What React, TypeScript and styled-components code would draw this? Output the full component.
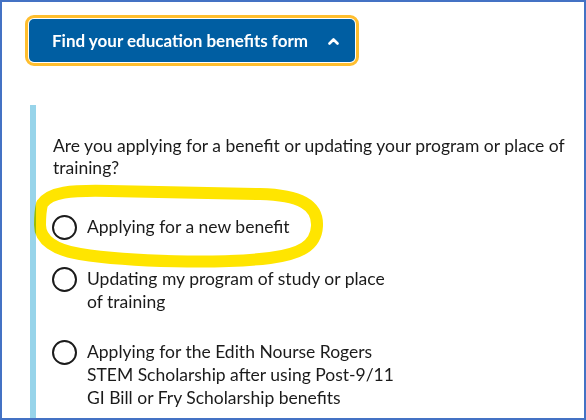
import styled, { createGlobalStyle } from "styled-components";

const GlobalStyle = createGlobalStyle`
  html, body {
    margin: 0;
    padding: 0;
    background: #ffffff;
  }
  body {
    width: 586px;
    height: 420px;
    overflow: hidden;
    font-family: Lato, "Noto Sans", sans-serif;
    color: #1b1b1b;
  }
`;

const Frame = styled.div`
  position: relative;
  box-sizing: border-box;
  width: 586px;
  height: 420px;
  border: 2px solid #4472c4;
  padding: 17px 0 0 27px;
  overflow: hidden;
`;

const ToggleButton = styled.button`
  display: flex;
  align-items: center;
  justify-content: space-between;
  box-sizing: border-box;
  width: 326px;
  height: 43px;
  padding: 0 16px 0 23px;
  border: none;
  border-radius: 5px;
  background: #005ea2;
  color: #ffffff;
  font-family: Lato, "Noto Sans", sans-serif;
  font-weight: 700;
  font-size: 17px;
  white-space: nowrap;
  outline: 3px solid #ffbe2e;
  outline-offset: 1px;
  cursor: pointer;
`;

const Chevron = styled.svg`
  width: 11px;
  height: 8px;
  flex-shrink: 0;
`;

const Fieldset = styled.div`
  margin: 43px 0 0 1px;
  padding: 30px 0 0 17px;
  border-left: 6px solid #97d4ea;
  height: 300px;
`;

const Question = styled.p`
  margin: 0;
  max-width: 525px;
  font-size: 17.5px;
  line-height: 22px;
`;

const RadioList = styled.div`
  display: flex;
  flex-direction: column;
  gap: 27px;
  margin-top: 36px;
`;

const RadioOption = styled.label`
  display: flex;
  align-items: flex-start;
  gap: 10px;
  font-size: 17.5px;
  line-height: 23px;
`;

const RadioCircle = styled.span`
  box-sizing: border-box;
  width: 25px;
  height: 25px;
  margin: 0 0 0 -1px;
  flex-shrink: 0;
  border: 2px solid #1b1b1b;
  border-radius: 50%;
  background: #ffffff;
`;

const RadioLabel = styled.span`
  max-width: 310px;
`;

const Highlight = styled.svg`
  position: absolute;
  top: -2px;
  left: -2px;
  width: 586px;
  height: 420px;
  pointer-events: none;
  mix-blend-mode: multiply;
`;

const options = [
  "Applying for a new benefit",
  "Updating my program of study or place of training",
  "Applying for the Edith Nourse Rogers STEM Scholarship after using Post-9/11 GI Bill or Fry Scholarship benefits",
];

export default function App() {
  return (
    <>
      <GlobalStyle />
      <Frame>
        <ToggleButton>
          <span>Find your education benefits form</span>
          <Chevron viewBox="0 0 11 8">
            <polyline
              points="1.5,6.5 5.5,2.5 9.5,6.5"
              fill="none"
              stroke="#ffffff"
              strokeWidth="2.6"
              strokeLinecap="round"
              strokeLinejoin="round"
            />
          </Chevron>
        </ToggleButton>

        <Fieldset>
          <Question>
            Are you applying for a benefit or updating your program or place of
            training?
          </Question>
          <RadioList>
            {options.map((text) => (
              <RadioOption key={text}>
                <RadioCircle />
                <RadioLabel>{text}</RadioLabel>
              </RadioOption>
            ))}
          </RadioList>
        </Fieldset>

        <Highlight viewBox="0 0 586 420">
          <path
            d="M 42 204 C 50 192, 70 190, 110 191 L 260 194 C 300 195, 318 205, 317 226 C 316 246, 300 254, 270 258 C 220 264, 130 262, 80 254 C 55 250, 40 240, 40 225 C 40 215, 41 208, 42 204"
            fill="none"
            stroke="#ffe500"
            strokeWidth="12"
            strokeLinecap="round"
            strokeLinejoin="round"
          />
        </Highlight>
      </Frame>
    </>
  );
}
